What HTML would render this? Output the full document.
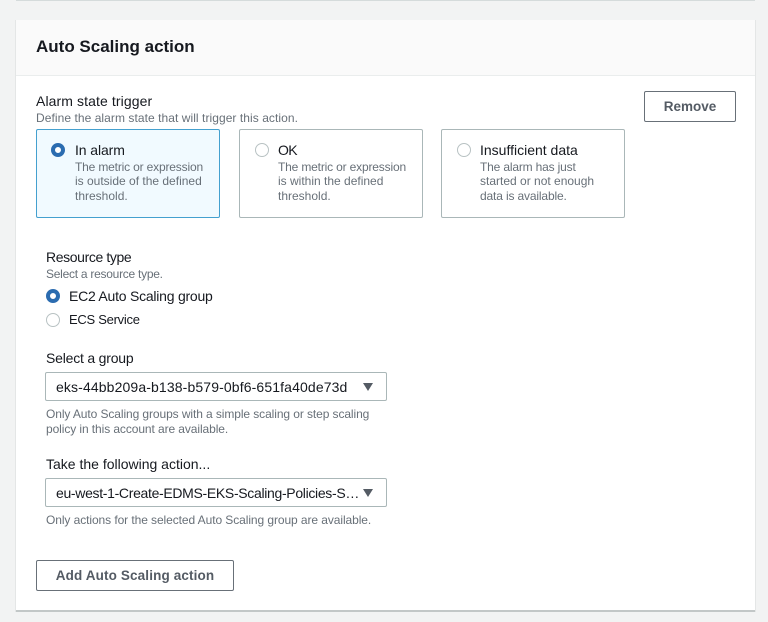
<!DOCTYPE html>
<html><head><meta charset="utf-8"><style>
html,body{margin:0;padding:0}
body{width:768px;height:622px;background:#f2f3f3;position:relative;overflow:hidden;font-family:"Liberation Sans",sans-serif;color:#16191f}
#w{position:absolute;left:0;top:0;width:768px;height:622px;filter:blur(.3px)}
.a{position:absolute;white-space:nowrap}
.t{font-size:14px;line-height:16px;color:#16191f}
.s{font-size:12px;line-height:14px;color:#687078}
.d{line-height:14.4px;top:160px}
.card{position:absolute;top:129px;width:182px;height:87px;border:1px solid #aab7b8;border-radius:2px;background:#fff}
.r{position:absolute;width:12px;height:12px;border:1px solid #b8c2c3;border-radius:50%;background:#fff}
.on{width:6px;height:6px;border:4px solid #2b6cb0;background:#fff}
.sel{position:absolute;left:45px;width:340px;height:27px;border:1px solid #aab7b8;border-radius:2px;background:#fff}
.btn{position:absolute;border:1px solid #687078;border-radius:2px;background:#fff;color:#545b64;font-weight:bold;font-size:13.5px;text-align:center;box-sizing:border-box}
.tri{position:absolute;width:0;height:0;border-left:5px solid transparent;border-right:5px solid transparent;border-top:8px solid #545b64}
</style></head><body><div id="w">
<div class="a" style="left:16px;top:0;width:739px;height:1px;background:#d5dbdb"></div>
<div class="a" style="left:16px;top:20px;width:739px;height:592px;background:#fff;box-shadow:-1px 0 0 #e4e6e6,1px 0 0 #e4e6e6;border-bottom:2px solid #c2c7c7;box-sizing:border-box"></div>
<div class="a" style="left:16px;top:20px;width:739px;height:55px;background:#fafafa;border-bottom:1px solid #eaeded"></div>
<div class="a" style="left:36px;top:37px;font-size:17px;line-height:20px;font-weight:bold;color:#16191f">Auto Scaling action</div>
<div class="a t" style="left:36px;top:93px;letter-spacing:.1px">Alarm state trigger</div>
<div class="a s" style="left:36px;top:111px;letter-spacing:.06px">Define the alarm state that will trigger this action.</div>
<div class="btn" style="left:644px;top:91px;width:92px;height:31px;line-height:29px">Remove</div>

<div class="card" style="left:36px;border-color:#44a0cf;background:#f1faff"></div>
<div class="r on" style="left:51px;top:143px"></div>
<div class="a t" style="left:75px;top:142px;letter-spacing:-.1px">In alarm</div>
<div class="a s d" style="left:75px"><span style="letter-spacing:-.17px">The metric or expression</span><br>is outside of the defined<br>threshold.</div>

<div class="card" style="left:239px"></div>
<div class="r" style="left:255px;top:143px"></div>
<div class="a t" style="left:278px;top:142px;letter-spacing:-.6px">OK</div>
<div class="a s d" style="left:278px"><span style="letter-spacing:-.17px">The metric or expression</span><br>is within the defined<br>threshold.</div>

<div class="card" style="left:441px"></div>
<div class="r" style="left:457px;top:143px"></div>
<div class="a t" style="left:480px;top:142px">Insufficient data</div>
<div class="a s d" style="left:480px"><span style="letter-spacing:-.17px">The alarm has just</span><br>started or not enough<br><span style="letter-spacing:-.15px">data is available.</span></div>

<div class="a t" style="left:46px;top:249px;letter-spacing:-.38px">Resource type</div>
<div class="a s" style="left:46px;top:267px;letter-spacing:-.26px">Select a resource type.</div>
<div class="r on" style="left:46px;top:289px"></div>
<div class="a t" style="left:69px;top:288px;letter-spacing:-.23px">EC2 Auto Scaling group</div>
<div class="r" style="left:46px;top:313px"></div>
<div class="a t" style="left:69px;top:312px;font-size:13px;letter-spacing:-.27px">ECS Service</div>

<div class="a t" style="left:46px;top:350px;letter-spacing:-.2px">Select a group</div>
<div class="sel" style="top:372px"></div>
<div class="a t" style="left:56px;top:379px;letter-spacing:.125px">eks-44bb209a-b138-b579-0bf6-651fa40de73d</div>
<div class="tri" style="left:363px;top:383px"></div>
<div class="a s" style="left:46px;top:407px;line-height:15px;letter-spacing:-.09px">Only Auto Scaling groups with a simple scaling or step scaling<br>policy in this account are available.</div>

<div class="a t" style="left:46px;top:456px">Take the following action...</div>
<div class="sel" style="top:478px"></div>
<div class="a t" style="left:56px;top:485px;letter-spacing:-.32px">eu-west-1-Create-EDMS-EKS-Scaling-Policies-S…</div>
<div class="tri" style="left:363px;top:489px"></div>
<div class="a s" style="left:46px;top:513px;letter-spacing:-.08px">Only actions for the selected Auto Scaling group are available.</div>

<div class="btn" style="left:36px;top:560px;width:198px;height:31px;line-height:29px;letter-spacing:.13px">Add Auto Scaling action</div>
</div></body></html>
